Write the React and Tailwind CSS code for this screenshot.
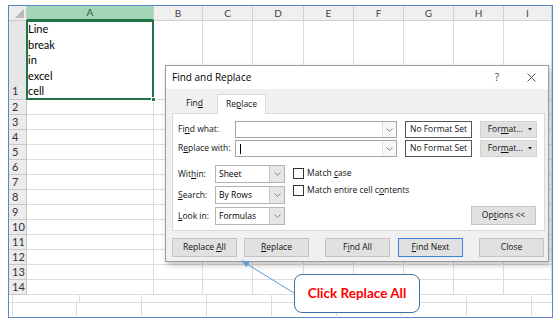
import React from "react";

const COLS = [
  { k: "A", w: "w-[127px]" },
  { k: "B", w: "w-[49px]" },
  { k: "C", w: "w-[50px]" },
  { k: "D", w: "w-[51px]" },
  { k: "E", w: "w-[50px]" },
  { k: "F", w: "w-[50px]" },
  { k: "G", w: "w-[50px]" },
  { k: "H", w: "w-[50px]" },
  { k: "I", w: "w-[48px]" },
];

const ROWS = [2, 3, 4, 5, 6, 7, 8, 9, 10, 11, 12, 13, 14];

const Chevron = () => (
  <svg width="7" height="4" viewBox="0 0 7 4">
    <path d="M0.5 0.5 L3.5 3.3 L6.5 0.5" fill="none" stroke="#7a7a7a" strokeWidth="0.9" />
  </svg>
);

const Combo = ({ cursor }) => (
  <div className="w-[162px] h-[17px] border border-[#a5a5a5] bg-white flex shrink-0">
    <div className="flex-1 flex items-center pl-[4px]">
      {cursor && <div className="w-px h-[10px] bg-black" />}
    </div>
    <div className="w-[14px] flex items-center justify-center bg-[#f7f7f7] border-l border-[#e3e3e3]">
      <Chevron />
    </div>
  </div>
);

const Select = ({ value }) => (
  <div className="w-[70px] h-[18px] border border-[#b4b4b4] bg-white flex shrink-0">
    <div className="flex-1 flex items-center pl-[3px] text-black">{value}</div>
    <div className="w-[15px] flex items-center justify-center bg-[#e6e6e6] border-l border-[#c8c8c8]">
      <Chevron />
    </div>
  </div>
);

const Btn = ({ children, w = "w-[65px]", blue, cls = "" }) => (
  <div
    className={`${w} h-[19px] shrink-0 flex items-center justify-center bg-[#e1e1e1] border ${
      blue ? "border-[#3a83d8]" : "border-[#c4c4c4]"
    } ${cls}`}
  >
    <span>{children}</span>
  </div>
);

const FormatBtn = () => (
  <div className="w-[57px] h-[17px] shrink-0 flex items-center justify-end pr-[4px] gap-[5px] bg-[#e1e1e1] border border-[#d2d2d2]">
    <span>
      For<u>m</u>at...
    </span>
    <svg width="4" height="3" viewBox="0 0 4 3">
      <path d="M0 0 L4 0 L2 2.5 Z" fill="#222" />
    </svg>
  </div>
);

const NoFormat = () => (
  <div className="w-[67px] h-[17px] shrink-0 flex items-center justify-center bg-white border border-[#555555]">
    No Format Set
  </div>
);

const Check = ({ children }) => (
  <div className="h-[17px] flex items-center gap-[3px]">
    <div className="w-[11px] h-[11px] border border-[#333333] bg-white" />
    <span>{children}</span>
  </div>
);

function Dialog() {
  return (
    <div className="absolute left-[156px] top-[59px] w-[384px] h-[197px] border border-[#9c9c9c] bg-[#f0f0f0] shadow-[2px_3px_6px_rgba(0,0,0,0.25)] font-['Open_Sans',sans-serif] text-[8.5px] text-[#111] flex flex-col">
      <div className="h-[23px] bg-white flex items-center pl-[6px] pr-[12px] shrink-0">
        <span className="text-[10px] text-black">Find and Replace</span>
        <span className="ml-auto text-[10px] text-[#444] mr-[28px]">?</span>
        <svg width="9" height="9" viewBox="0 0 9 9">
          <path d="M0.5 0.5 L8.5 8.5 M8.5 0.5 L0.5 8.5" stroke="#444" strokeWidth="0.9" />
        </svg>
      </div>

      <div className="flex pl-[6px] pt-[5px] shrink-0">
        <div className="w-[45px] h-[19px] flex items-center justify-center">
          <span>
            Fin<u>d</u>
          </span>
        </div>
        <div className="w-[49px] h-[20px] -mb-px z-10 flex items-center justify-center bg-white border border-b-0 border-[#d9d9d9]">
          <span>
            Re<u>p</u>lace
          </span>
        </div>
      </div>

      <div className="ml-[6px] w-[373px] h-[118px] bg-white border border-[#d9d9d9] pt-[7px] pl-[5px] shrink-0">
        <div className="flex items-center h-[17px]">
          <div className="w-[57px]">
            Fi<u>n</u>d what:
          </div>
          <Combo />
          <div className="ml-[8px]">
            <NoFormat />
          </div>
          <div className="ml-[8px]">
            <FormatBtn />
          </div>
        </div>
        <div className="flex items-center h-[17px] mt-[2px]">
          <div className="w-[57px]">
            R<u>e</u>place with:
          </div>
          <Combo cursor />
          <div className="ml-[8px]">
            <NoFormat />
          </div>
          <div className="ml-[8px]">
            <FormatBtn />
          </div>
        </div>

        <div className="flex mt-[8px] pr-[8px]">
          <div className="flex flex-col gap-[3px]">
            <div className="flex items-center">
              <div className="w-[37px]">
                Wit<u>h</u>in:
              </div>
              <Select value="Sheet" />
            </div>
            <div className="flex items-center">
              <div className="w-[37px]">
                <u>S</u>earch:
              </div>
              <Select value="By Rows" />
            </div>
            <div className="flex items-center">
              <div className="w-[37px]">
                <u>L</u>ook in:
              </div>
              <Select value="Formulas" />
            </div>
          </div>
          <div className="ml-[8px] flex flex-col">
            <Check>
              Match <u>c</u>ase
            </Check>
            <Check>
              Match entire cell c<u>o</u>ntents
            </Check>
          </div>
          <div className="ml-auto self-end">
            <Btn>
              Op<u>t</u>ions &lt;&lt;
            </Btn>
          </div>
        </div>
      </div>

      <div className="flex pl-[6px] mt-[7px]">
        <Btn>
          Replace <u>A</u>ll
        </Btn>
        <Btn cls="ml-[7px]">
          <u>R</u>eplace
        </Btn>
        <Btn cls="ml-[16px]">
          F<u>i</u>nd All
        </Btn>
        <Btn cls="ml-[8px]" blue>
          <u>F</u>ind Next
        </Btn>
        <Btn cls="ml-[16px]">Close</Btn>
      </div>
    </div>
  );
}

export default function App() {
  return (
    <div className="w-[557px] h-[322px] bg-white overflow-hidden">
      <div className="ml-[8px] mt-[5px] w-[545px] h-[313px] border border-[#5a86c9] relative overflow-hidden font-['Lato',sans-serif] text-[#333]">
        {/* column headers */}
        <div className="flex h-[15px]">
          <div className="w-[18px] h-full bg-[#ececec] border-r border-b border-[#c9c9c9] relative shrink-0">
            <svg className="absolute right-[2px] bottom-[2px]" width="9" height="9" viewBox="0 0 9 9">
              <path d="M9 0 L9 9 L0 9 Z" fill="#b9b9b9" />
            </svg>
          </div>
          {COLS.map((c) => (
            <div
              key={c.k}
              className={`${c.w} h-full shrink-0 flex items-center justify-center text-[10px] border-r ${
                c.k === "A"
                  ? "bg-[#a3d6b7] border-b-2 border-b-[#217346] border-r-[#c9c9c9] text-[#1b5e37]"
                  : "bg-[#efefef] border-b border-[#d0d0d0] text-[#444]"
              }`}
            >
              {c.k}
            </div>
          ))}
        </div>

        {/* row 1 */}
        <div className="flex h-[79px]">
          <div className="w-[18px] h-full bg-[#e6e6e6] border-r border-b border-[#c9c9c9] shrink-0 flex items-end pl-[3px] pb-[1px] text-[11px] leading-[14px] text-[#333]">
            1
          </div>
          {COLS.map((c) =>
            c.k === "A" ? (
              <div key={c.k} className={`${c.w} h-full shrink-0 relative border-r border-b border-[#dcdcdc] pl-[1px] text-[11px] leading-[15.6px] text-black`}>
                <div>Line</div>
                <div>break</div>
                <div>in</div>
                <div>excel</div>
                <div>cell</div>
                <div className="absolute left-[-1px] top-[-1px] right-[-1px] bottom-[-1px] border-2 border-[#217346]" />
                <div className="absolute right-[-3px] bottom-[-3px] w-[5px] h-[5px] bg-[#217346] border border-white" />
              </div>
            ) : (
              <div key={c.k} className={`${c.w} h-full shrink-0 border-r border-b border-[#dcdcdc]`} />
            )
          )}
        </div>

        {/* rows 2-14 */}
        {ROWS.map((r) => (
          <div key={r} className="flex h-[15px]">
            <div className="w-[18px] h-full bg-[#ececec] border-r border-b border-[#c9c9c9] shrink-0 flex items-center pl-[3px] text-[11px] text-[#333]">
              {r}
            </div>
            {COLS.map((c) => (
              <div key={c.k} className={`${c.w} h-full shrink-0 border-r border-b border-[#dcdcdc]`} />
            ))}
          </div>
        ))}

        {/* strip below */}
        <div className="flex flex-col h-[21px]">
          <div className="flex h-[8px] border-b border-[#dcdcdc]">
            <div className="w-[68px] h-full shrink-0 border-r border-l border-[#dcdcdc] ml-[3px] -mr-[3px]" />
            {[0, 1, 2, 3, 4, 5, 6].map((i) => (
              <div key={i} className="w-[65px] h-full shrink-0 border-r border-[#dcdcdc]" />
            ))}
          </div>
          <div className="flex flex-1">
            <div className="w-[65px] h-full shrink-0 border-r border-l border-[#dcdcdc] ml-[3px]" />
            {[0, 1, 2, 3, 4, 5, 6].map((i) => (
              <div key={i} className="w-[65px] h-full shrink-0 border-r border-[#dcdcdc]" />
            ))}
          </div>
        </div>

        <Dialog />

        {/* arrow */}
        <svg className="absolute left-0 top-0 pointer-events-none" width="545" height="313" viewBox="0 0 545 313">
          <line x1="285" y1="287" x2="237" y2="257.5" stroke="#5b9bd5" strokeWidth="1" />
          <path d="M232 254.5 L241 255.5 L237.5 261 Z" fill="#5b9bd5" />
        </svg>

        {/* callout */}
        <div className="absolute left-[285px] top-[268px] w-[126px] h-[39px] rounded-[8px] border border-[#41719c] bg-white flex items-center justify-center font-['Lato',sans-serif] font-bold text-[13.5px] text-[#ff0000]">
          Click Replace All
        </div>
      </div>
    </div>
  );
}
